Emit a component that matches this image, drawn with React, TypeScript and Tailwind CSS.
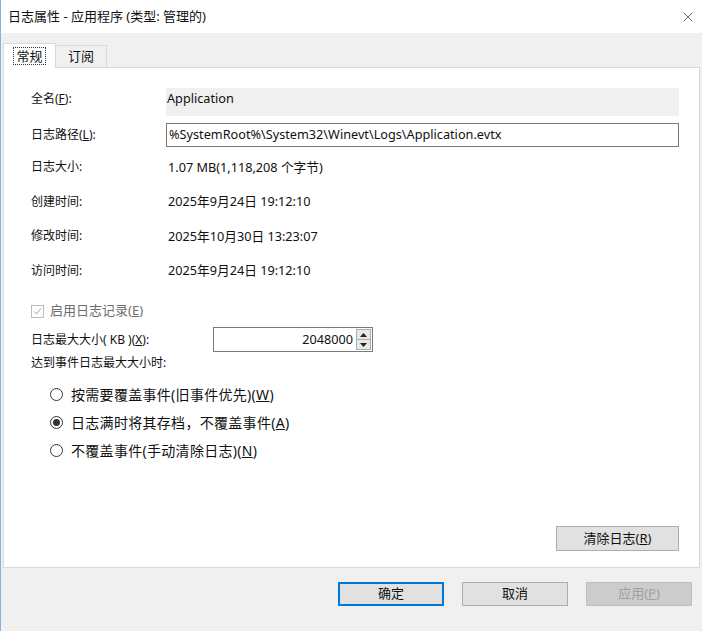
import { X } from "lucide-react";

const font = "font-['Noto_Sans','Noto_Sans_CJK_SC',sans-serif]";

function InfoRow({ label, value }: { label: string; value: string }) {
  return (
    <div className="flex h-[34.5px] items-center">
      <div className="w-[135px]">{label}</div>
      <div className="pl-[2px] text-[12.7px]">{value}</div>
    </div>
  );
}

function Radio({ checked, children }: { checked?: boolean; children: React.ReactNode }) {
  return (
    <div className="flex h-[28px] items-center pl-[19px]">
      <span className="mr-[8px] flex h-[13px] w-[13px] items-center justify-center rounded-full border border-[#333] bg-white">
        {checked && <span className="h-[7px] w-[7px] rounded-full bg-[#333]" />}
      </span>
      <span className="text-[14px] tracking-[0.3px]">{children}</span>
    </div>
  );
}

function Btn({ children, primary, disabled }: { children: React.ReactNode; primary?: boolean; disabled?: boolean }) {
  return (
    <div
      className={
        "flex h-[24px] w-[106px] items-center justify-center text-[13px] " +
        (primary
          ? "border-2 border-[#0078d7] bg-[#e1e1e1]"
          : disabled
          ? "border border-[#bfbfbf] bg-[#cccccc] text-[#a0a0a0]"
          : "border border-[#adadad] bg-[#e1e1e1]")
      }
    >
      {children}
    </div>
  );
}

export default function App() {
  return (
    <div className={`${font} flex h-[631px] w-[702px] flex-col border-l border-[#7fb4e6] text-[12px] text-[#111]`}>
      {/* Title bar */}
      <div className="flex h-[33px] items-center justify-between bg-white pl-[7px] pr-[6px]">
        <span className="text-[13px]">日志属性 - 应用程序 (类型: 管理的)</span>
        <X className="h-[16px] w-[16px] text-[#222]" strokeWidth={1} />
      </div>

      <div className="flex flex-1 flex-col bg-[#f0f0f0] pl-[2px] pr-[2px] pt-[10px]">
        {/* Tabs */}
        <div className="relative z-10 flex h-[24px] items-end">
          <div className="-mb-px flex h-[25px] w-[53px] items-center justify-center border border-b-0 border-[#d9d9d9] bg-white">
            <span className="border border-dotted border-[#333] px-[2px] text-[13px] leading-[16px]">常规</span>
          </div>
          <div className="flex h-[22px] w-[51px] items-center justify-center border border-b-0 border-l-0 border-[#d9d9d9] bg-[#f0f0f0] text-[13px]">
            订阅
          </div>
        </div>

        {/* Panel */}
        <div className="flex h-[501px] flex-col border border-[#d9d9d9] bg-white pl-[27px] pr-[20px] pt-[20px]">
          <div className="flex h-[28px] items-start">
            <div className="w-[135px] pt-[2px]">全名(<u>F</u>):</div>
            <div className="h-[28px] flex-1 bg-[#f0f0f0] pl-[1px] pt-[1px] text-[12.7px]">Application</div>
          </div>
          <div className="mt-[7px] flex h-[24px] items-center">
            <div className="w-[135px]">日志路径(<u>L</u>):</div>
            <div className="flex h-[24px] flex-1 items-center border border-[#7a7a7a] pl-[2px] text-[12.7px]">
              %SystemRoot%\System32\Winevt\Logs\Application.evtx
            </div>
          </div>
          <div className="mt-[3px]">
            <InfoRow label="日志大小:" value="1.07 MB(1,118,208 个字节)" />
            <InfoRow label="创建时间:" value="2025年9月24日 19:12:10" />
            <InfoRow label="修改时间:" value="2025年10月30日 13:23:07" />
            <InfoRow label="访问时间:" value="2025年9月24日 19:12:10" />
          </div>

          <div className="mt-[13px] flex h-[20px] items-center text-[13px] text-[#6d6d6d]">
            <span className="mr-[6px] flex h-[13px] w-[13px] items-center justify-center border border-[#bcbcbc]">
              <svg viewBox="0 0 11 11" className="h-[11px] w-[11px]">
                <path d="M2 5.5 L4.5 8 L9 2.5" fill="none" stroke="#a0a0a0" strokeWidth="1" />
              </svg>
            </span>
            启用日志记录(<u>E</u>)
          </div>

          <div className="mt-[6px] flex h-[25px] items-center">
            <div className="w-[182px]">日志最大大小( KB )(<u>X</u>):</div>
            <div className="flex h-[25px] w-[160px] items-center border border-[#7a7a7a]">
              <div className="flex-1 pr-[3px] text-right text-[12.7px]">2048000</div>
              <div className="mr-[1px] flex h-[21px] w-[15px] flex-col border border-[#adadad] bg-[#e8e8e8]">
                <div className="flex flex-1 items-center justify-center border-b border-[#adadad]">
                  <svg viewBox="0 0 7 4" className="h-[4px] w-[7px]"><path d="M0 4 L3.5 0 L7 4 Z" fill="#222" /></svg>
                </div>
                <div className="flex flex-1 items-center justify-center">
                  <svg viewBox="0 0 7 4" className="h-[4px] w-[7px]"><path d="M0 0 L3.5 4 L7 0 Z" fill="#222" /></svg>
                </div>
              </div>
            </div>
          </div>

          <div className="mt-[3px] flex h-[16px] items-center">达到事件日志最大大小时:</div>

          <div className="mt-[9px]">
            <Radio>按需要覆盖事件(旧事件优先)(<u>W</u>)</Radio>
            <Radio checked>日志满时将其存档，不覆盖事件(<u>A</u>)</Radio>
            <Radio>不覆盖事件(手动清除日志)(<u>N</u>)</Radio>
          </div>

          <div className="mb-[16px] mt-auto flex justify-end">
            <div className="flex h-[25px] w-[123px] items-center justify-center border border-[#adadad] bg-[#e1e1e1] text-[13px]">
              清除日志(<u>R</u>)
            </div>
          </div>
        </div>

        {/* Bottom buttons */}
        <div className="mt-[14px] flex justify-end gap-[18px] pr-[8px]">
          <Btn primary>确定</Btn>
          <Btn>取消</Btn>
          <Btn disabled>应用(<u>P</u>)</Btn>
        </div>
      </div>
    </div>
  );
}
